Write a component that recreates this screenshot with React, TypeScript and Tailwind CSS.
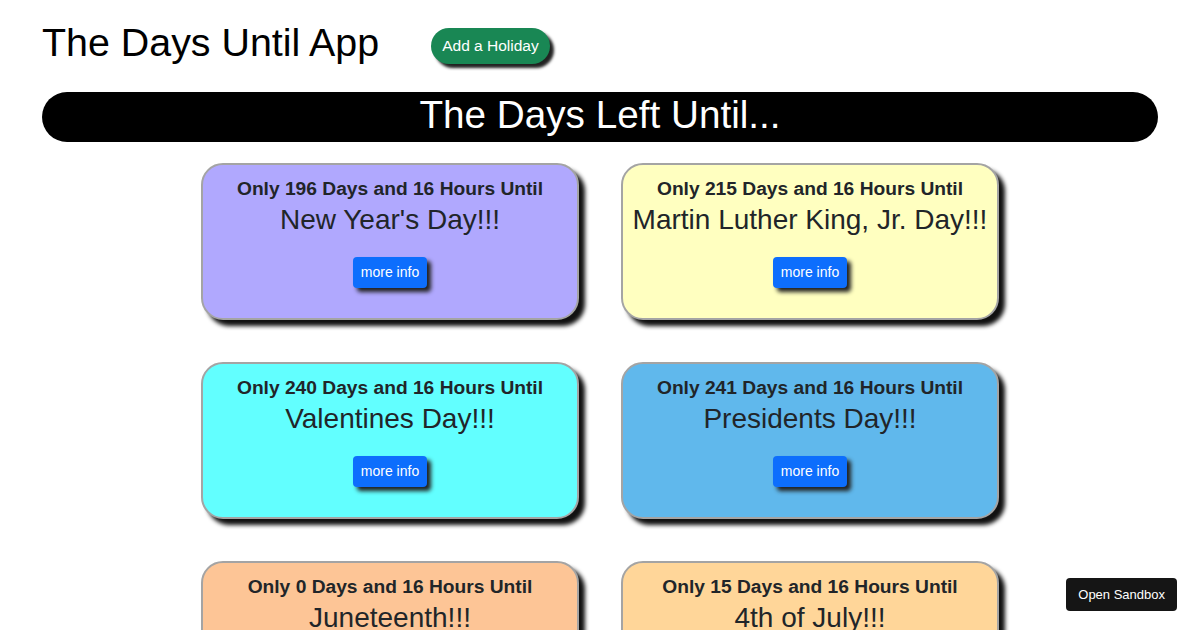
import React from "react";

const holidays = [
  { days: 196, name: "New Year's Day", bg: "bg-[#b0a8fe]" },
  { days: 215, name: "Martin Luther King, Jr. Day", bg: "bg-[#ffffc0]" },
  { days: 240, name: "Valentines Day", bg: "bg-[#62ffff]" },
  { days: 241, name: "Presidents Day", bg: "bg-[#60b8ec]" },
  { days: 0, name: "Juneteenth", bg: "bg-[#fdc596]" },
  { days: 15, name: "4th of July", bg: "bg-[#ffd699]" },
];

const hours = 16;

const HolidayCard = ({ days, name, bg }: { days: number; name: string; bg: string }) => {
  return (
    <div
      className={`${bg} h-[157px] w-[378px] rounded-[22px] border-2 border-[#a4a4a4] shadow-[6px_6px_4px_#111] flex flex-col items-center pt-[12px] text-[#212529]`}
    >
      <div className="text-[19.2px] font-bold leading-[24px]">
        Only {days} Days and {hours} Hours Until
      </div>
      <div className="text-[28px] leading-[34px] mt-[2px]">{name}!!!</div>
      <button className="mt-[20px] h-[31px] px-[8px] rounded-[4px] bg-[#0d6efd] text-white text-[14px] shadow-[4px_4px_4px_#222]">
        more info
      </button>
    </div>
  );
};

const App = () => {
  return (
    <div className="h-[630px] bg-white font-['Liberation_Sans',Arial,sans-serif] text-black relative overflow-hidden">
      <div className="px-[42px] pt-[18px]">
        <div className="flex items-center">
          <h1 className="text-[39.4px] leading-[48px]">The Days Until App</h1>
          <button className="ml-[52px] mt-[7px] h-[36px] px-[11px] rounded-full bg-[#198754] text-white text-[15.5px] shadow-[4px_4px_3px_#222]">
            Add a Holiday
          </button>
        </div>
        <div className="mt-[26px] h-[50px] rounded-full bg-black text-white text-[38.7px] leading-[46px] text-center">
          The Days Left Until...
        </div>
        <div className="mt-[21px] grid grid-cols-[378px_378px] justify-center gap-x-[42px] gap-y-[42px]">
          {holidays.map((h) => (
            <HolidayCard key={h.name} days={h.days} name={h.name} bg={h.bg} />
          ))}
        </div>
      </div>
      <div className="absolute right-[23px] bottom-[19px] h-[33px] px-[12px] rounded-[4px] bg-[#151515] text-white text-[13px] flex items-center">
        Open Sandbox
      </div>
    </div>
  );
};

export default App;
